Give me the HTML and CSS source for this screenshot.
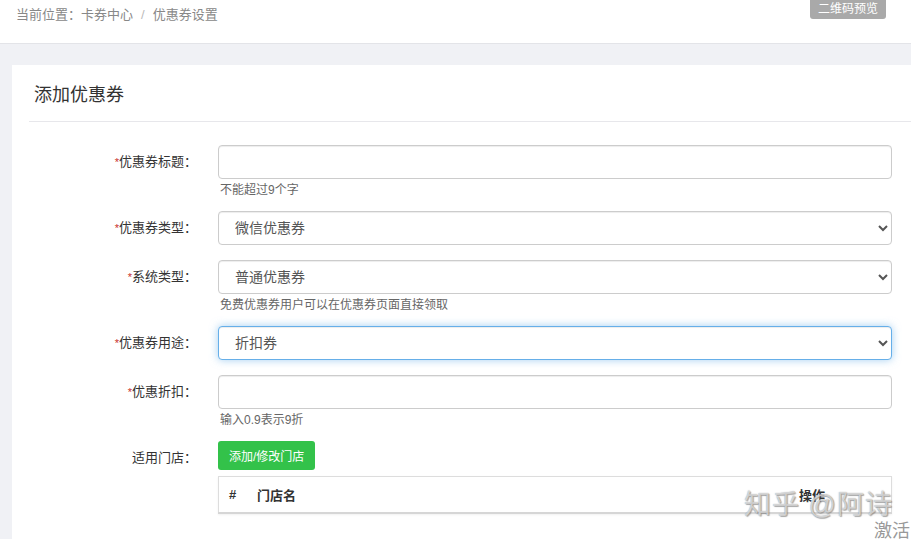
FILE: index.html
```html
<!DOCTYPE html>
<html lang="zh-CN">
<head>
    <meta charset="UTF-8">
    <meta name="viewport" content="width=device-width, initial-scale=1.0">
    <title>优惠券设置</title>
    <link rel="stylesheet" href="styles.css">
</head>
<body>
    <div class="topbar">
        <div class="breadcrumb">
            当前位置：<span>卡券中心</span><span class="sep">/</span><span>优惠券设置</span>
        </div>
        <button class="qr-btn" type="button">二维码预览</button>
    </div>

    <div class="card">
        <div class="card-header">
            <h2>添加优惠券</h2>
        </div>

        <form class="coupon-form">
            <div class="form-group">
                <label><i>*</i>优惠券标题：</label>
                <div class="control">
                    <input type="text" class="form-control">
                    <p class="help">不能超过9个字</p>
                </div>
            </div>

            <div class="form-group">
                <label><i>*</i>优惠券类型：</label>
                <div class="control">
                    <select class="form-control">
                        <option>微信优惠券</option>
                    </select>
                </div>
            </div>

            <div class="form-group">
                <label><i>*</i>系统类型：</label>
                <div class="control">
                    <select class="form-control">
                        <option>普通优惠券</option>
                    </select>
                    <p class="help">免费优惠券用户可以在优惠券页面直接领取</p>
                </div>
            </div>

            <div class="form-group">
                <label><i>*</i>优惠券用途：</label>
                <div class="control">
                    <select class="form-control is-focus">
                        <option>折扣券</option>
                    </select>
                </div>
            </div>

            <div class="form-group">
                <label><i>*</i>优惠折扣：</label>
                <div class="control">
                    <input type="text" class="form-control">
                    <p class="help">输入0.9表示9折</p>
                </div>
            </div>

            <div class="form-group">
                <label>适用门店：</label>
                <div class="control">
                    <button class="btn-green" type="button">添加/修改门店</button>
                    <table class="store-table">
                        <thead>
                            <tr>
                                <th class="col-id">#</th>
                                <th>门店名</th>
                                <th class="col-op">操作</th>
                            </tr>
                        </thead>
                    </table>
                </div>
            </div>
        </form>
    </div>

    <div class="watermark">知乎 @阿诗</div>
    <div class="activate">激活</div>
</body>
</html>
```

FILE: styles.css
```css
body {
    margin: 0;
    width: 911px;
    height: 539px;
    overflow: hidden;
    background-color: #f0f1f5;
    font-family: "Liberation Sans", "Noto Sans CJK SC", sans-serif;
    color: #333;
    position: relative;
}

.topbar {
    height: 43px;
    background-color: #fff;
    border-bottom: 1px solid #e3e4e8;
    display: flex;
    justify-content: space-between;
    align-items: flex-start;
    padding: 0 25px 0 16px;
}

.breadcrumb {
    font-size: 13px;
    line-height: 18px;
    padding-top: 6px;
    color: #888;
}

.breadcrumb .sep {
    margin: 0 8px;
    color: #bbb;
}

.qr-btn {
    height: 19px;
    padding: 0 8px;
    border: none;
    border-radius: 0 0 3px 3px;
    background-color: #a9a9a9;
    color: #fff;
    font-family: inherit;
    font-size: 12px;
    line-height: 19px;
}

.card {
    margin: 21px 0 0 12px;
    padding-left: 17px;
    background-color: #fff;
    height: 474px;
    overflow: hidden;
}

.card-header {
    height: 56px;
    border-bottom: 1px solid #e7e7eb;
    display: flex;
    align-items: center;
    padding-left: 5px;
}

.card-header h2 {
    margin: 0;
    font-size: 18px;
    font-weight: normal;
    color: #333;
}

.coupon-form {
    padding: 23px 19px 0 0;
}

.form-group {
    display: grid;
    grid-template-columns: 168px 1fr;
    column-gap: 21px;
    margin-bottom: 15px;
}

.form-group label {
    text-align: right;
    font-size: 13px;
    line-height: 34px;
    color: #333;
}

.form-group label i {
    font-style: normal;
    color: #c9302c;
    font-size: 11px;
}

.form-control {
    display: block;
    box-sizing: border-box;
    width: 100%;
    height: 34px;
    padding: 6px 16px;
    border: 1px solid #ccc;
    border-radius: 4px;
    background-color: #fff;
    box-shadow: inset 0 1px 1px rgba(0, 0, 0, 0.075);
    font-family: inherit;
    font-size: 14px;
    color: #555;
}

select.form-control {
    padding: 6px 12px;
}

.form-control.is-focus {
    border-color: #66afe9;
    outline: none;
    box-shadow: inset 0 1px 1px rgba(0, 0, 0, 0.075), 0 0 8px rgba(102, 175, 233, 0.6);
}

.help {
    margin: 6px 0 0 2px;
    font-size: 12px;
    line-height: 11px;
    color: #666;
}

.btn-green {
    display: block;
    height: 29px;
    padding: 0 11px;
    border: none;
    border-radius: 3px;
    background-color: #33c24a;
    color: #fff;
    font-family: inherit;
    font-size: 12px;
}

.store-table {
    width: 100%;
    margin-top: 6px;
    border-collapse: collapse;
    border: 1px solid #ddd;
    border-bottom: 2px solid #d6d6d6;
    box-shadow: 0 1px 2px rgba(0, 0, 0, 0.06);
}

.store-table th {
    height: 35px;
    padding: 0 10px;
    text-align: left;
    font-size: 13px;
    font-weight: bold;
    color: #333;
}

.store-table .col-id {
    width: 8px;
}

.store-table .col-op {
    width: 82px;
}

.watermark {
    position: absolute;
    left: 744px;
    top: 483px;
    font-size: 27px;
    letter-spacing: 1px;
    color: rgba(255, 255, 255, 0.6);
    text-shadow: 0 0 1px rgba(100, 100, 100, 0.7), 1px 1px 1px rgba(120, 120, 120, 0.6);
}

.activate {
    position: absolute;
    left: 874px;
    top: 516px;
    font-size: 18px;
    color: #999;
}
```
